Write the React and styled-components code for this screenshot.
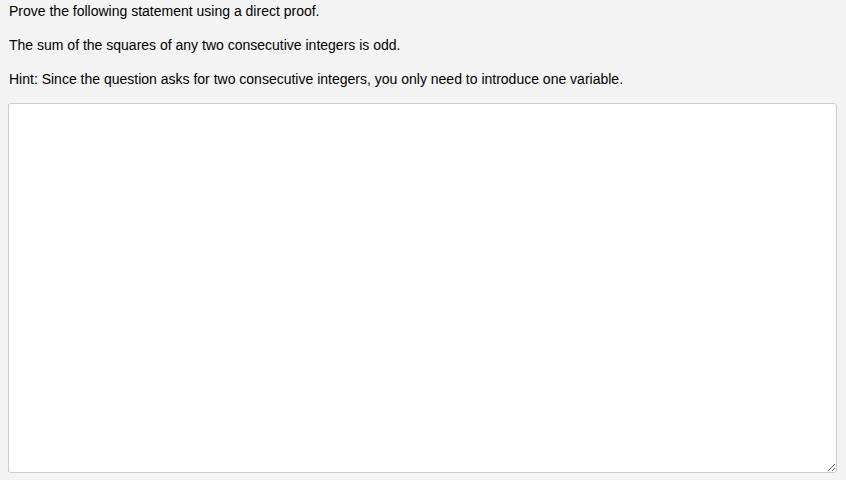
import React from "react";
import styled, { createGlobalStyle } from "styled-components";

const GlobalStyle = createGlobalStyle`
    html, body {
        margin: 0;
        padding: 0;
        background: #f4f4f4;
    }
    body {
        font-family: "Liberation Sans", Arial, sans-serif;
        font-size: 14px;
        color: #000;
    }
`;

const Page = styled.div`
    padding: 0 9px 7px 8px;
    width: 846px;
    height: 480px;
    box-sizing: border-box;
    display: flex;
    flex-direction: column;
`;

const Para = styled.p`
    margin: 3px 0 0 1px;
    line-height: 17px;

    & + & {
        margin-top: 17px;
    }
`;

const Answer = styled.textarea`
    margin-top: 15px;
    flex: 1;
    width: 100%;
    box-sizing: border-box;
    background: #fff;
    border: 1px solid #cccccc;
    border-radius: 3px;
    font-family: inherit;
    font-size: 14px;
    padding: 6px;
    resize: vertical;
    outline: none;
`;

export default function App() {
    return (
        <Page>
            <GlobalStyle />
            <Para>Prove the following statement using a direct proof.</Para>
            <Para>The sum of the squares of any two consecutive integers is odd.</Para>
            <Para>
                Hint: Since the question asks for two consecutive integers, you only need to
                introduce one variable.
            </Para>
            <Answer />
        </Page>
    );
}
